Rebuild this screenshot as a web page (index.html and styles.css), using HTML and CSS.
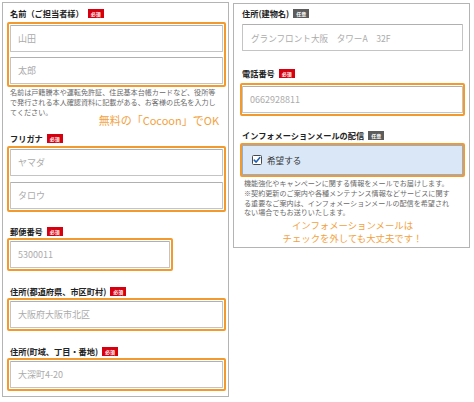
FILE: index.html
```html
<!DOCTYPE html>
<html lang="ja">
<head>
<meta charset="utf-8">
<title>フォーム</title>
<link rel="stylesheet" href="styles.css">
</head>
<body>
<div class="page">
  <div class="panel left">
    <div class="label l1">名前（ご担当者様）<span class="badge req">必須</span></div>
    <div class="hl g1">
      <div class="input">山田</div>
      <div class="input">太郎</div>
    </div>
    <p class="help">名前は戸籍謄本や運転免許証、住民基本台帳カードなど、役所等<br>で発行される本人確認資料に記載がある、お客様の氏名を入力し<br>てください。</p>
    <p class="note note-left">無料の「Cocoon」でOK</p>

    <div class="label l2">フリガナ<span class="badge req">必須</span></div>
    <div class="hl g2">
      <div class="input">ヤマダ</div>
      <div class="input">タロウ</div>
    </div>

    <div class="label l3">郵便番号<span class="badge req">必須</span></div>
    <div class="hl short">
      <div class="input">5300011</div>
    </div>

    <div class="label l4">住所(都道府県、市区町村)<span class="badge req">必須</span></div>
    <div class="hl">
      <div class="input">大阪府大阪市北区</div>
    </div>

    <div class="label l4">住所(町域、丁目・番地)<span class="badge req">必須</span></div>
    <div class="hl">
      <div class="input">大深町4-20</div>
    </div>
  </div>

  <div class="panel right">
    <div class="label r1">住所(建物名)<span class="badge opt">任意</span></div>
    <div class="input plain">グランフロント大阪　タワーA　32F</div>

    <div class="label r2">電話番号<span class="badge req">必須</span></div>
    <div class="hl wide">
      <div class="input">0662928811</div>
    </div>

    <div class="label r3">インフォメーションメールの配信<span class="badge opt">任意</span></div>
    <div class="hl wide">
      <div class="check-row">
        <span class="checkbox"><svg viewBox="0 0 10 10" width="8" height="8"><path d="M1.5 5.2 L4 7.6 L8.6 2" fill="none" stroke="#1d5fb0" stroke-width="1.9" stroke-linecap="round" stroke-linejoin="round"/></svg></span>
        <span class="check-text">希望する</span>
      </div>
    </div>
    <p class="help help-right">機能強化やキャンペーンに関する情報をメールでお届けします。<br>※契約更新のご案内や各種メンテナンス情報などサービスに関す<br>る重要なご案内は、インフォメーションメールの配信を希望され<br>ない場合でもお送りいたします。</p>
    <p class="note note-right">インフォメーションメールは<br>チェックを外しても大丈夫です！</p>
  </div>
</div>
</body>
</html>
```

FILE: styles.css
```css
* { box-sizing: border-box; }

html, body {
  margin: 0;
  padding: 0;
  background: #ffffff;
}

body {
  width: 474px;
  height: 402px;
  overflow: hidden;
  font-family: "Noto Sans CJK JP", "Noto Sans", sans-serif;
  color: #222;
}

.page {
  display: flex;
  align-items: flex-start;
  padding: 2px 0 0 2px;
  gap: 4px;
}

.panel {
  border: 1px solid #b4b4b4;
  background: #fff;
  display: flex;
  flex-direction: column;
}

.left {
  width: 227px;
  height: 395px;
  padding: 4px 5px 0 7px;
}

.right {
  width: 237px;
  height: 245px;
  margin-top: 1px;
  padding: 3px 6px 0 8px;
}

.label {
  display: flex;
  align-items: center;
  height: 12px;
  font-size: 8.2px;
  font-weight: 700;
  color: #222;
  white-space: nowrap;
  line-height: 12px;
}

.l2 { margin-top: 6px; }
.l3 { margin-top: 13px; }
.l4 { margin-top: 14px; }
.r2 { margin-top: 16px; }
.r3 { margin-top: 13px; }

.badge {
  display: inline-flex;
  align-items: center;
  justify-content: center;
  width: 16px;
  height: 9px;
  margin-left: 4px;
  font-size: 5px;
  font-weight: 700;
  color: #fff;
  line-height: 1;
}

.req { background: #d7000f; }
.opt { background: #5c5c5c; }

.hl {
  border: 2px solid #f39a2c;
  border-radius: 2px;
  padding: 1px;
  margin: 1px -3px 0 -3px;
  display: flex;
  flex-direction: column;
  gap: 5px;
}

.g1 { margin-top: 3px; }
.g2 { margin-top: 2px; gap: 6px; }

.hl.short {
  width: 166px;
}

.hl.wide {
  margin: 4px -2px 0 -2px;
  padding: 1px 0;
}

.r3 + .hl.wide {
  margin-top: 2px;
  padding: 0;
}

.input {
  height: 27px;
  border: 1px solid #c4c4c4;
  border-top-color: #b0b0b0;
  border-radius: 1px;
  background: #fff;
  display: flex;
  align-items: center;
  padding-left: 7px;
  font-size: 9px;
  color: #ababab;
  white-space: nowrap;
}

.input.plain {
  margin-top: 5px;
  padding-left: 8px;
  font-size: 8.6px;
}

.help {
  margin: 0;
  font-size: 7.1px;
  line-height: 10px;
  color: #6a6a6a;
  white-space: nowrap;
}

.help-right {
  margin-top: 2px;
  padding-left: 2px;
  line-height: 9.8px;
}

.note {
  margin: 0;
  color: #f2a23e;
  white-space: nowrap;
}

.note-left {
  margin-top: -3px;
  font-size: 11px;
  line-height: 12px;
  text-align: right;
  padding-right: 4px;
}

.note-right {
  font-size: 9.4px;
  line-height: 13px;
  text-align: center;
  margin-top: 1px;
}

.check-row {
  height: 30px;
  background: #d9e7f7;
  border: 1px solid #8daedb;
  display: flex;
  align-items: center;
  padding-left: 9px;
  gap: 5px;
}

.checkbox {
  width: 10px;
  height: 10px;
  background: #fff;
  border: 1px solid #4a4a4a;
  border-radius: 1.5px;
  display: flex;
  align-items: center;
  justify-content: center;
}

.check-text {
  font-size: 8.6px;
  color: #333;
}
```
